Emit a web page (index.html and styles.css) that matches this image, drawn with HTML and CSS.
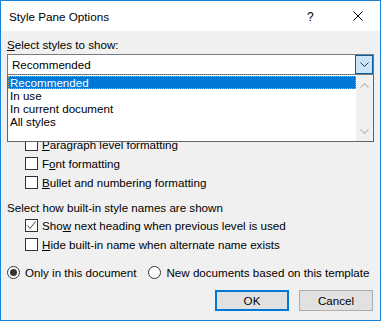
FILE: index.html
```html
<!DOCTYPE html>
<html>
<head>
<meta charset="utf-8">
<link rel="stylesheet" href="styles.css">
</head>
<body>
<div class="window">
  <div class="titlebar">
    <span class="title">Style Pane Options</span>
    <span class="help">?</span>
    <svg class="close" width="10" height="10" viewBox="0 0 10 10"><path d="M0.5 0.5 L9.5 9.5 M9.5 0.5 L0.5 9.5" stroke="#000" stroke-width="1" fill="none"/></svg>
  </div>
  <div class="content">
    <div class="label"><u>S</u>elect styles to show:</div>
    <div class="combo-wrap">
      <div class="combo">
        <span class="combo-text">Recommended</span>
        <span class="combo-btn">
          <svg width="9" height="5" viewBox="0 0 9 5"><path d="M0.5 0.5 L4.5 4.5 L8.5 0.5" stroke="#333" stroke-width="1" fill="none"/></svg>
        </span>
      </div>
      <div class="listbox">
        <div class="items">
          <div class="item selected">Recommended</div>
          <div class="item">In use</div>
          <div class="item">In current document</div>
          <div class="item">All styles</div>
        </div>
        <div class="scrollbar">
          <svg width="9" height="5" viewBox="0 0 9 5"><path d="M0.5 4.5 L4.5 0.5 L8.5 4.5" stroke="#bcbcbc" stroke-width="1.2" fill="none"/></svg>
          <svg width="9" height="5" viewBox="0 0 9 5"><path d="M0.5 0.5 L4.5 4.5 L8.5 0.5" stroke="#bcbcbc" stroke-width="1.2" fill="none"/></svg>
        </div>
      </div>
    </div>
    <div class="checks group1">
      <div class="check"><span class="box"></span><span><u>P</u>aragraph level formatting</span></div>
      <div class="check"><span class="box"></span><span>F<u>o</u>nt formatting</span></div>
      <div class="check"><span class="box"></span><span><u>B</u>ullet and numbering formatting</span></div>
    </div>
    <div class="label section">Select how built-in style names are shown</div>
    <div class="checks">
      <div class="check"><span class="box"><svg width="11" height="11" viewBox="0 0 11 11"><path d="M1.5 5.5 L4 8.5 L9.5 1.5" stroke="#444" stroke-width="1" fill="none"/></svg></span><span>Sho<u>w</u> next heading when previous level is used</span></div>
      <div class="check"><span class="box"></span><span><u>H</u>ide built-in name when alternate name exists</span></div>
    </div>
    <div class="radios">
      <div class="radio"><span class="circle on"></span><span>Only in this document</span></div>
      <div class="radio"><span class="circle"></span><span>New documents based on this template</span></div>
    </div>
    <div class="buttons">
      <div class="btn default">OK</div>
      <div class="btn">Cancel</div>
    </div>
  </div>
</div>
</body>
</html>
```

FILE: styles.css
```css
html, body {
  margin: 0;
  padding: 0;
}
body {
  font-family: "Liberation Sans", Arial, sans-serif;
  font-size: 11.6px;
  color: #000;
}
.window {
  width: 381px;
  height: 321px;
  box-sizing: border-box;
  border: 1px solid #1883d7;
  background: #f0f0f0;
  display: flex;
  flex-direction: column;
}
.titlebar {
  height: 30px;
  background: #fff;
  display: flex;
  align-items: center;
  flex-shrink: 0;
}
.title {
  font-size: 11.7px;
  margin-left: 8px;
  flex: 1;
  padding-top: 1px;
}
.help {
  font-size: 12px;
  width: 10px;
  margin-right: 36px;
  padding-top: 1px;
}
.close {
  margin-right: 17px;
}
.content {
  padding: 7px 6px 0 6px;
  display: flex;
  flex-direction: column;
}
.label {
  line-height: 14px;
  height: 14px;
}
u {
  text-decoration: underline;
  text-underline-offset: 1px;
}
.combo-wrap {
  position: relative;
  margin-top: 2px;
}
.combo {
  height: 21px;
  box-sizing: border-box;
  border: 1px solid #7a7a7a;
  background: #fff;
  display: flex;
  align-items: center;
}
.combo-text {
  flex: 1;
  padding-left: 4px;
}
.combo-btn {
  width: 18px;
  height: 19px;
  box-sizing: border-box;
  border: 1px solid #0a5ea8;
  background: #cce4f7;
  display: flex;
  align-items: center;
  justify-content: center;
}
.listbox {
  position: absolute;
  left: 0;
  top: 21px;
  width: 367px;
  height: 67px;
  box-sizing: border-box;
  border: 1px solid #646464;
  border-top: none;
  background: #fff;
  display: flex;
  z-index: 2;
}
.items {
  flex: 1;
  padding-top: 1px;
}
.item {
  height: 13px;
  line-height: 13px;
  padding-left: 2px;
  box-sizing: border-box;
}
.item.selected {
  background: #0078d7;
  color: #fff;
  outline: 1px dotted #f0a040;
  outline-offset: -1px;
}
.scrollbar {
  width: 17px;
  background: #f0f0f0;
  display: flex;
  flex-direction: column;
  align-items: center;
  justify-content: space-between;
  padding: 8px 0 7px;
  box-sizing: border-box;
}
.checks {
  display: flex;
  flex-direction: column;
}
.group1 {
  margin-top: 60px;
}
.check {
  height: 19px;
  display: flex;
  align-items: center;
  padding-left: 18px;
}
.box {
  width: 13px;
  height: 13px;
  box-sizing: border-box;
  border: 1px solid #333;
  background: #fff;
  margin-right: 4px;
  display: flex;
  align-items: center;
  justify-content: center;
}
.section {
  margin-top: 9px;
  margin-bottom: 1px;
}
.radios {
  margin-top: 9px;
  height: 18px;
  display: flex;
  align-items: center;
}
.radio {
  display: flex;
  align-items: center;
}
.radio + .radio {
  margin-left: 12px;
}
.circle {
  width: 13px;
  height: 13px;
  box-sizing: border-box;
  border: 1px solid #333;
  border-radius: 50%;
  background: #fff;
  margin-right: 5px;
  display: flex;
  align-items: center;
  justify-content: center;
}
.circle.on::after {
  content: "";
  width: 7px;
  height: 7px;
  border-radius: 50%;
  background: #333;
}
.buttons {
  margin-top: 9px;
  display: flex;
  justify-content: flex-end;
  gap: 10px;
  padding-right: 1px;
}
.btn {
  width: 74px;
  height: 21px;
  box-sizing: border-box;
  border: 1px solid #adadad;
  background: #e1e1e1;
  display: flex;
  align-items: center;
  justify-content: center;
}
.btn.default {
  border: 2px solid #0078d7;
}
```
